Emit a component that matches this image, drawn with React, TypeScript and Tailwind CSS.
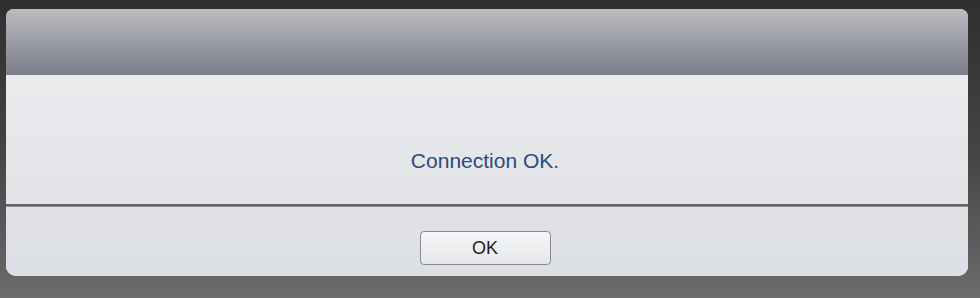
import React from "react";

export default function App() {
  return (
    <div
      className="w-[980px] h-[298px] bg-gradient-to-b from-[#2f2f2f] via-[#444444] to-[#6c6c6c] pt-[9px] pl-[6px] pr-[12px] pb-[22px]"
      style={{ fontFamily: '"Liberation Sans", Arial, sans-serif' }}
    >
      <div className="h-full w-full rounded-t-[8px] rounded-b-[10px] overflow-hidden flex flex-col bg-[#e6e7ea]">
        <div className="h-[66px] shrink-0 bg-gradient-to-b from-[#bcbcc0] to-[#7b7e8b]" />
        <div className="h-[129px] shrink-0 bg-gradient-to-b from-[#eaebed] to-[#e2e3e7] flex items-start justify-center pt-[73px] pr-[4px]">
          <span className="text-[21px] leading-[25px] text-[#2b4a80]">Connection OK.</span>
        </div>
        <div className="h-[3px] shrink-0 bg-[#606368] border-b border-[#8e9094]" />
        <div className="flex-1 bg-gradient-to-b from-[#e1e2e6] to-[#dcdfe5] flex justify-center pt-[24px] pr-[4px]">
          <button className="w-[131px] h-[34px] rounded-[4px] border border-[#8a8a8a] bg-gradient-to-b from-[#f6f6f7] to-[#e6e7ea] text-[18px] text-[#1e1e1e] flex items-center justify-center">
            OK
          </button>
        </div>
      </div>
    </div>
  );
}
